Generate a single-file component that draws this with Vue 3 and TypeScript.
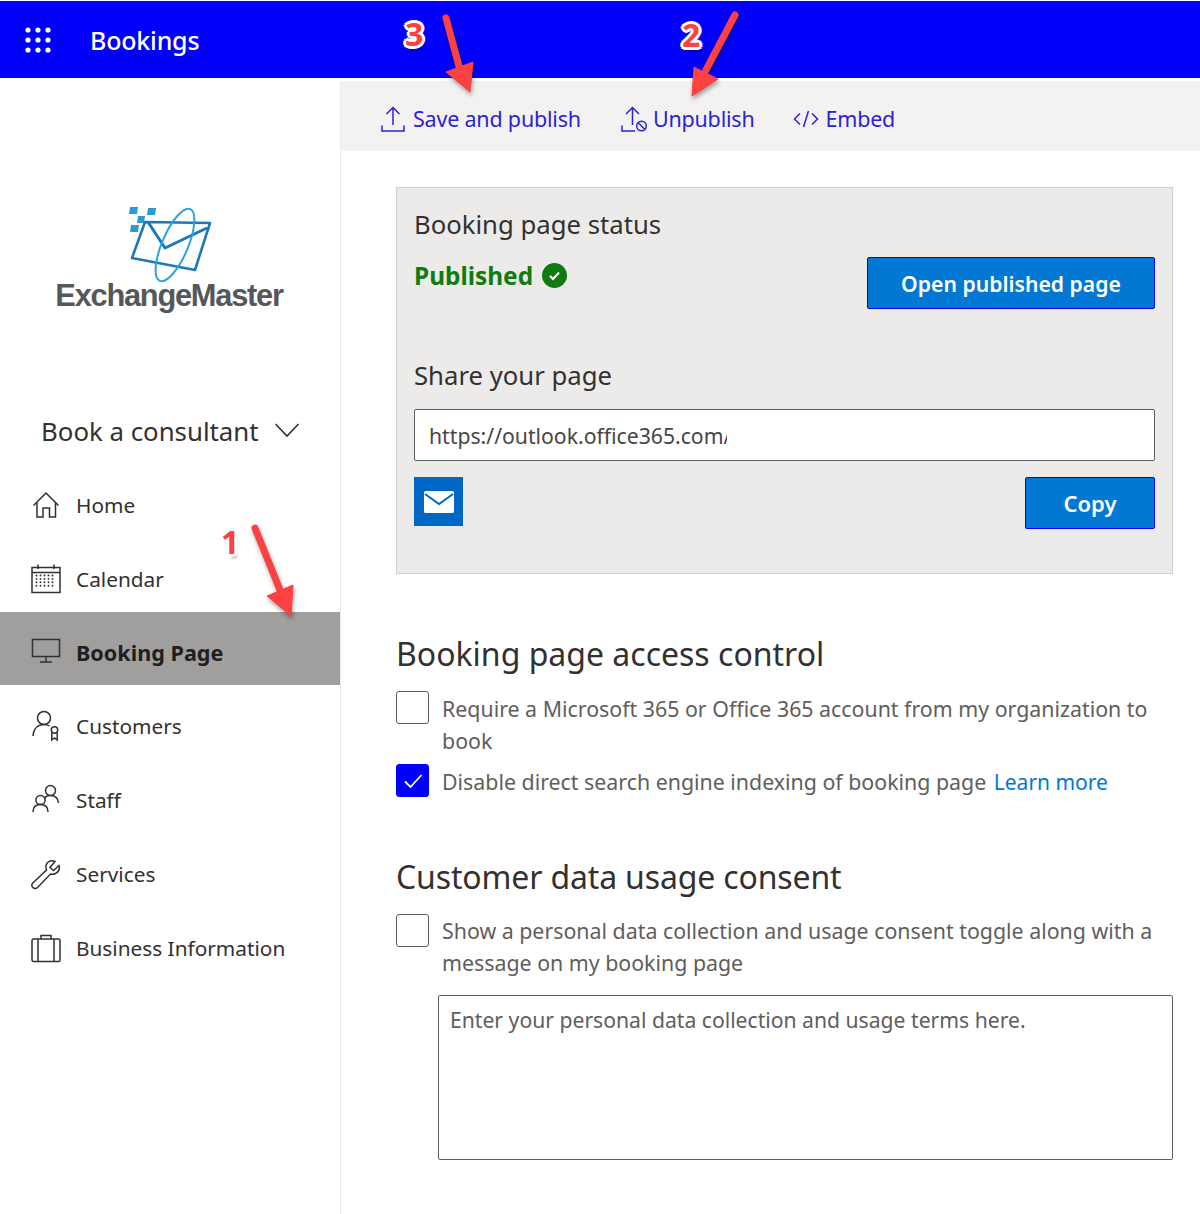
<script setup lang="ts">
const navItems: { key: string; label: string; active?: boolean }[] = [
  { key: 'home', label: 'Home' },
  { key: 'calendar', label: 'Calendar' },
  { key: 'page', label: 'Booking Page', active: true },
  { key: 'customers', label: 'Customers' },
  { key: 'staff', label: 'Staff' },
  { key: 'services', label: 'Services' },
  { key: 'business', label: 'Business Information' },
]
const calDots: number[][] = []
for (let r = 0; r < 4; r++) for (let c = 0; c < 5; c++) calDots.push([6.5 + c * 4, 12.5 + r * 3.4])
</script>

<template>
  <div class="page">
    <header class="topbar">
      <svg class="waffle" width="26" height="26" viewBox="0 0 26 26" fill="#fff">
        <template v-for="y in [3, 13, 23]" :key="y">
          <circle v-for="x in [3, 13, 23]" :key="x" :cx="x" :cy="y" r="2.6" />
        </template>
      </svg>
      <span class="brand">Bookings</span>
    </header>

    <div class="body">
      <aside class="sidebar">
        <div class="logo">
          <svg width="84" height="78" viewBox="0 0 84 78" fill="none">
            <g fill="#2a9ad8">
              <path d="M2 0 H10 L9 7 H1 Z" />
              <path d="M20 1 H28 L27 8 H19 Z" />
              <path d="M10 9 H17 L16 16 H9 Z" />
              <path d="M3 18 H11 L10 25 H2 Z" />
            </g>
            <path d="M17 15 L82 16 L67 63 L4 51 Z" stroke="#1c78b8" stroke-width="2.6" stroke-linejoin="round" />
            <path d="M20 15 L37 41 L79 21" stroke="#1c78b8" stroke-width="3" stroke-linejoin="round" />
            <ellipse cx="47" cy="38" rx="13" ry="39" transform="rotate(23 47 38)" stroke="#2aa3e0" stroke-width="2" />
          </svg>
          <span class="logo-text">ExchangeMaster</span>
        </div>

        <div class="picker">
          <span>Book a consultant</span>
          <svg width="26" height="16" viewBox="0 0 26 16" fill="none" stroke="#323130" stroke-width="1.6"><path d="M1.5 2 L13 14 L24.5 2" /></svg>
        </div>

        <nav class="nav">
          <div v-for="item in navItems" :key="item.key" class="nav-item" :class="{ active: item.active }">
            <svg class="nav-icon" width="32" height="32" viewBox="0 0 32 32" fill="none" stroke="#323130" stroke-width="1.5">
              <g v-if="item.key === 'home'">
                <path d="M3.5 16.5 L16 4 L28.5 16.5" />
                <path d="M7 13.5 V28 H13 V19 H19.5 V28 H25.5 V13.5" />
              </g>
              <g v-else-if="item.key === 'calendar'">
                <rect x="2" y="4.5" width="28" height="25" />
                <path d="M2 9.5 H30 M8 1.5 V6 M24 1.5 V6" />
                <circle v-for="(d, i) in calDots" :key="i" :cx="d[0]" :cy="d[1]" r="0.95" fill="#323130" stroke="none" />
              </g>
              <g v-else-if="item.key === 'page'">
                <rect x="2.5" y="3.5" width="27" height="17" />
                <path d="M16 20.5 V26 M10 26 H22" />
              </g>
              <g v-else-if="item.key === 'customers'">
                <circle cx="14" cy="8" r="6.5" />
                <path d="M3 26 C3.5 18.5 8 14.5 14 14.5 C16 14.5 18 15 19.5 16" />
                <circle cx="24.5" cy="20" r="3.2" />
                <path d="M21.8 23 V30 L24.5 28 L27.2 30 V23" />
              </g>
              <g v-else-if="item.key === 'staff'">
                <circle cx="20.5" cy="6.5" r="5" />
                <path d="M14.5 15 C15 12.5 17.5 11.5 20.5 11.5 C25 11.5 28 14 28.5 19" />
                <circle cx="10.5" cy="16" r="4.6" />
                <path d="M3 28 C3 23 6 20.5 10.5 20.5 C15 20.5 18 23 18 28" />
              </g>
              <g v-else-if="item.key === 'services'">
                <path d="M29 7.5 L23.5 12.5 L20 9.5 L25 3.5 C21 1.5 16.5 3.5 16 8 C15.8 9.5 16 11 16.5 12 L2.8 25 C1 27 2 29 3.5 30 C5 30.8 6.5 30.5 7.5 29.5 L20.5 16 C22 16.5 24 16.3 25.5 15.5 C28.5 14 30 11 29 7.5 Z" />
              </g>
              <g v-else>
                <rect x="2" y="7" width="28" height="22.5" rx="1.5" />
                <path d="M8 7 V29.5 M24 7 V29.5 M11 7 V3.5 H21 V7" />
              </g>
            </svg>
            <span class="nav-label">{{ item.label }}</span>
          </div>
        </nav>
      </aside>

      <main class="main">
        <div class="toolbar">
          <div class="tool tool-save">
            <svg width="24" height="26" viewBox="0 0 24 26" fill="none" stroke="#2b22d6" stroke-width="1.5">
              <path d="M12 19 V1.5 M5.5 8 L12 1.5 L18.5 8 M1 19.5 V25 H23 V19.5" />
            </svg>
            <span>Save and publish</span>
          </div>
          <div class="tool tool-unpublish">
            <svg width="28" height="26" viewBox="0 0 28 26" fill="none" stroke="#2b22d6" stroke-width="1.5">
              <path d="M11.5 19 V1.5 M5 8 L11.5 1.5 L18 8 M1 19.5 V25 H14" />
              <circle cx="20.5" cy="20" r="4.8" />
              <path d="M17 16.5 L24 23.5" />
            </svg>
            <span>Unpublish</span>
          </div>
          <div class="tool tool-embed">
            <svg width="26" height="18" viewBox="0 0 26 18" fill="none" stroke="#2b22d6" stroke-width="1.5">
              <path d="M7 3.5 L1.5 9 L7 14.5 M19 3.5 L24.5 9 L19 14.5 M15.5 1 L10.5 17" />
            </svg>
            <span>Embed</span>
          </div>
        </div>

        <div class="content">
          <section class="panel">
            <div class="panel-title">Booking page status</div>
            <div class="status-row">
              <div class="status">
                <span>Published</span>
                <svg width="25" height="25" viewBox="0 0 25 25">
                  <circle cx="12.5" cy="12.5" r="12.5" fill="#107c10" />
                  <path d="M8 13 L11 16 L17 9.5" fill="none" stroke="#fff" stroke-width="2.2" />
                </svg>
              </div>
              <div class="btn btn-open">Open published page</div>
            </div>
            <div class="panel-title share">Share your page</div>
            <div class="url"><span class="url-text">https://outlook.office365.com/</span></div>
            <div class="actions">
              <div class="mail">
                <svg width="30" height="22" viewBox="0 0 30 22">
                  <rect width="30" height="22" rx="1.5" fill="#fff" />
                  <path d="M1 3 L15 13 L29 3" fill="none" stroke="#0068c4" stroke-width="2" />
                </svg>
              </div>
              <div class="btn btn-copy">Copy</div>
            </div>
          </section>

          <h2 class="heading h-access">Booking page access control</h2>
          <div class="check-row">
            <span class="box"></span>
            <p>Require a Microsoft 365 or Office 365 account from my organization to book</p>
          </div>
          <div class="check-row row-second">
            <span class="box checked">
              <svg width="20" height="16" viewBox="0 0 20 16" fill="none" stroke="#fff" stroke-width="1.8"><path d="M2 8.5 L7.5 14 L18.5 2" /></svg>
            </span>
            <p>Disable direct search engine indexing of booking page <a class="learn">Learn more</a></p>
          </div>

          <h2 class="heading h-consent">Customer data usage consent</h2>
          <div class="check-row row-third">
            <span class="box"></span>
            <p>Show a personal data collection and usage consent toggle along with a message on my booking page</p>
          </div>
          <div class="terms">Enter your personal data collection and usage terms here.</div>
        </div>
      </main>
    </div>

    <!-- Annotation overlay drawn on top of the screenshot -->
    <svg class="arrows" width="1200" height="700" viewBox="0 0 1200 700">
      <g fill="#fb4141" stroke="#fb4141" stroke-linejoin="round">
        <g class="arrow">
          <path d="M446 18 L460 70" stroke-width="7" stroke-linecap="round" fill="none" />
          <path d="M446 72 L473 62 L470 92 Z" stroke-width="1" />
        </g>
        <g class="arrow">
          <path d="M735 15 L706 70" stroke-width="7" stroke-linecap="round" fill="none" />
          <path d="M694 67 L718 79 L692 96 Z" stroke-width="1" />
        </g>
        <g class="arrow">
          <path d="M255 528 L280 590" stroke-width="7" stroke-linecap="round" fill="none" />
          <path d="M267 596 L293 585 L291 616 Z" stroke-width="1" />
        </g>
      </g>
    </svg>
    <span class="mark mark-3">3</span>
    <span class="mark mark-2">2</span>
    <span class="mark mark-1">1</span>
  </div>
</template>

<style>
html, body { margin: 0; background: #fff; }
</style>

<style scoped>
.page {
  position: relative;
  width: 1200px;
  height: 1214px;
  overflow: hidden;
  padding-top: 1px;
  box-sizing: border-box;
  background: #fff;
  color: #323130;
  font-family: "Noto Sans", "Open Sans", sans-serif;
}
.topbar {
  height: 77px;
  background: #0000fb;
  display: flex;
  align-items: center;
  padding-left: 25px;
  gap: 39px;
  color: #fff;
}
.brand { font-size: 25px; font-weight: 500; letter-spacing: -0.2px; }
.body { display: flex; height: 1136px; padding-top: 3px; box-sizing: border-box; }
.sidebar {
  width: 340px;
  flex: none;
  display: flex;
  flex-direction: column;
}
.logo {
  height: 315px;
  padding-top: 126px;
  box-sizing: border-box;
  display: flex;
  flex-direction: column;
  align-items: center;
}
.logo-text {
  font-family: "Liberation Sans", sans-serif;
  font-weight: 700;
  font-size: 30.8px;
  letter-spacing: -1.25px;
  line-height: 30px;
  color: #55585b;
  margin: -4px 2px 0 0;
}
.picker {
  height: 68px;
  box-sizing: border-box;
  padding: 2px 0 0 41px;
  display: flex;
  align-items: center;
  gap: 15px;
  font-size: 25.8px;
}
.picker svg { margin-bottom: 2px; }
.nav { display: flex; flex-direction: column; }
.nav-item {
  height: 74px;
  box-sizing: border-box;
  padding-top: 7px;
  display: flex;
  align-items: center;
  padding-left: 30px;
  gap: 14px;
  font-size: 20.8px;
}
.nav-item.active { height: 73px; background: #a19f9d; font-weight: 700; font-size: 21.6px; color: #201f1e; }
.nav-icon { flex: none; }

.main { flex: 1; border-left: 1px solid #edebe9; display: flex; flex-direction: column; min-width: 0; }
.toolbar {
  height: 70px;
  flex: none;
  box-sizing: border-box;
  padding-top: 5px;
  background: #f3f2f1;
  display: flex;
  align-items: center;
  color: #2b22d6;
  font-size: 21.5px;
  letter-spacing: -0.2px;
}
.tool { display: flex; align-items: center; }
.tool-save { margin-left: 40px; gap: 8px; }
.tool-unpublish { margin-left: 40px; gap: 4px; }
.tool-embed { margin-left: 38px; gap: 7px; }

.content { padding: 36px 27px 0 55px; }
.panel {
  height: 387px;
  box-sizing: border-box;
  background: #edebe9;
  border: 1px solid #d2d0ce;
  padding: 18px 17px 0 17px;
}
.panel-title { font-size: 25.7px; line-height: 38px; color: #323130; }
.status-row { display: flex; justify-content: space-between; height: 90px; }
.status {
  display: flex;
  align-items: center;
  gap: 9px;
  height: 38px;
  margin-top: 12px;
  font-size: 24.4px;
  font-weight: 700;
  color: #107c10;
}
.btn {
  background: #0078d4;
  border: 1px solid #0000fb;
  color: #fff;
  font-size: 22px;
  font-weight: 600;
  display: flex;
  align-items: center;
  justify-content: center;
  box-sizing: border-box;
  border-radius: 2px;
}
.btn-open { width: 288px; height: 52px; margin-top: 13px; font-size: 21.2px; }
.btn-copy { width: 130px; height: 52px; }
.share { margin-top: 23px; }
.url {
  height: 52px;
  margin-top: 14px;
  box-sizing: border-box;
  background: #fff;
  border: 1px solid #605e5c;
  border-radius: 2px;
  padding-left: 14px;
  display: flex;
  align-items: center;
  font-size: 21.2px;
  color: #484644;
}
.url-text { display: block; width: 298px; overflow: hidden; white-space: nowrap; }
.actions { display: flex; justify-content: space-between; margin-top: 16px; }
.mail {
  width: 49px;
  height: 49px;
  background: #0068c4;
  display: flex;
  align-items: center;
  justify-content: center;
}
.heading { margin: 0; font-weight: 400; font-size: 32px; line-height: 46px; color: #323130; }
.h-access { margin-top: 57px; }
.h-consent { margin-top: 56px; letter-spacing: -0.15px; }
.check-row { display: flex; gap: 13px; margin-top: 14px; }
.check-row p {
  margin: 2px 0 0;
  font-size: 21.35px;
  line-height: 32px;
  color: #605e5c;
  flex: 1;
}
.row-second { margin-top: 7px; }
.row-third { margin-top: 14px; }
.row-third p { margin-top: 1px; }
.box {
  flex: none;
  width: 33px;
  height: 33px;
  box-sizing: border-box;
  border: 1px solid #605e5c;
  border-radius: 3px;
  background: #fff;
  display: flex;
  align-items: center;
  justify-content: center;
}
.box.checked { background: #0000fb; border-color: #0000fb; }
.learn { color: #0078d4; margin-left: 2px; font-size: 21px; }
.terms {
  margin: 16px 0 0 42px;
  height: 165px;
  box-sizing: border-box;
  border: 1px solid #605e5c;
  border-radius: 2px;
  padding: 8px 11px;
  font-size: 21.15px;
  line-height: 32px;
  color: #605e5c;
}

.arrows { position: absolute; left: 0; top: 0; pointer-events: none; }
.arrow { filter: drop-shadow(1px 3px 2px rgba(0, 0, 0, 0.35)); }
.mark {
  position: absolute;
  font-family: "Noto Sans", sans-serif;
  font-weight: 700;
  font-size: 32px;
  line-height: 36px;
  color: #fb4141;
  text-shadow: -2px -2px 0 #fff, 2px -2px 0 #fff, -2px 2px 0 #fff, 2px 2px 0 #fff, 0 -3px 0 #fff, 0 3px 0 #fff, -3px 0 0 #fff, 3px 0 0 #fff, 2px 4px 3px rgba(0, 0, 0, 0.4);
}
.mark-3 { left: 405px; top: 16px; }
.mark-2 { left: 682px; top: 17px; }
.mark-1 { left: 221px; top: 524px; }
</style>
